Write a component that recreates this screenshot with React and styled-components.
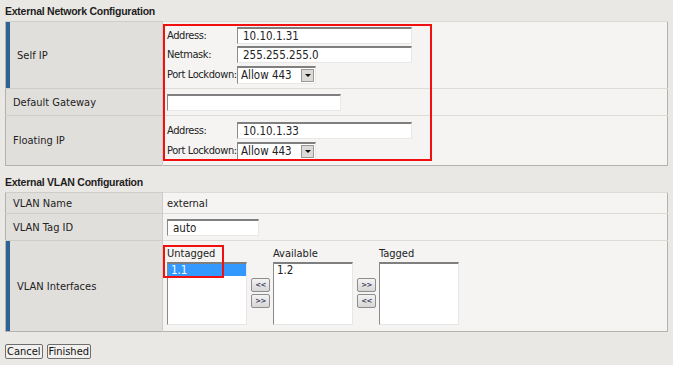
import React from "react";
import styled, { createGlobalStyle } from "styled-components";

const GlobalStyle = createGlobalStyle`
    html, body {
        margin: 0;
        padding: 0;
        background: #eae8e4;
        font: 11px 'DejaVu Sans Condensed', 'Liberation Sans', Arial, sans-serif;
        color: #222;
    }
`

const Page = styled.div`
    width: 673px;
    height: 365px;
    padding-top: 5px;
    box-sizing: border-box;
`

const SectionTitle = styled.div`
    padding: 0 5px;
    height: 16px;
    font: bold 10.5px 'Liberation Sans', Arial, sans-serif;
    letter-spacing: -0.25px;
    color: #1e1e1e;
    margin-top: ${({top}) => top || 0}px;
`

const TableWrap = styled.div`
    position: relative;
    margin: 0 5px;
    width: 663px;
`

const Table = styled.table`
    width: 100%;
    border-collapse: collapse;
    border: 1px solid #b4b2ae;
    background: #f5f4f2;
`

const Label = styled.td`
    box-sizing: border-box;
    width: 157px;
    height: ${({h}) => h}px;
    padding: 0 0 0 ${({bar}) => (bar ? 11 : 7)}px;
    background: #e1dfdb;
    border-top: 1px solid #cfcdc9;
    border-right: 1px solid #cfcdc9;
    box-shadow: ${({bar}) => (bar ? 'inset 4px 0 0 #2d6295' : 'none')};
    vertical-align: middle;
    color: #222;
    white-space: nowrap;
`

const Value = styled.td`
    padding: ${({pad}) => pad || '0 0 0 4px'};
    border-top: 1px solid #dddbd7;
    vertical-align: ${({valign}) => valign || 'middle'};
`

const FieldRow = styled.div`
    display: flex;
    align-items: center;
    height: 17px;
    margin-bottom: ${({gap}) => (gap === undefined ? 3 : gap)}px;
`

const FieldLabel = styled.span`
    width: 70px;
    flex: none;
    white-space: nowrap;
    letter-spacing: -0.4px;
`

const TextBox = styled.div`
    width: ${({w}) => w}px;
    height: 17px;
    box-sizing: border-box;
    background: #fff;
    border-style: solid;
    border-width: 2px 1px 1px 1px;
    border-color: #7f7f7f #e8e8e8 #e8e8e8 #8a8a8a;
    padding: 1px 0 0 5px;
    font-size: 11.5px;
    line-height: 13px;
    color: #222;
`

const Select = styled.div`
    width: 79px;
    height: 18px;
    box-sizing: border-box;
    background: #fff;
    border-style: solid;
    border-width: 2px 1px 1px 1px;
    border-color: #7f7f7f #e8e8e8 #e8e8e8 #8a8a8a;
    display: flex;
    align-items: center;
    justify-content: space-between;
    padding-left: 3px;
    font-size: 11.5px;
`

const SelectArrow = styled.div`
    width: 13px;
    height: 13px;
    margin-right: 1px;
    box-sizing: border-box;
    background: #dcdad6;
    border: 1px solid #9a9894;
    display: flex;
    align-items: center;
    justify-content: center;
    &::after {
        content: '';
        border-left: 3px solid transparent;
        border-right: 3px solid transparent;
        border-top: 3px solid #111;
    }
`

const RedBox = styled.div`
    position: absolute;
    left: ${({x}) => x}px;
    top: ${({y}) => y}px;
    width: ${({w}) => w}px;
    height: ${({h}) => h}px;
    border: 2px solid #f01010;
    box-sizing: border-box;
    pointer-events: none;
`

const ListGroup = styled.div`
    display: flex;
    align-items: flex-start;
`

const ListColumn = styled.div`
    display: flex;
    flex-direction: column;
    width: 80px;
    margin-right: ${({mr}) => mr || 0}px;
`

const ListTitle = styled.div`
    height: 14px;
    line-height: 12px;
    color: #222;
`

const ListBox = styled.div`
    height: 63px;
    box-sizing: border-box;
    background: #fff;
    border-style: solid;
    border-width: 2px 1px 1px 1px;
    border-color: #7f7f7f #e6e6e6 #e6e6e6 #8a8a8a;
`

const ListItem = styled.div`
    height: 12px;
    line-height: 12px;
    padding-left: 3px;
    font-size: 11.5px;
    background: ${({selected}) => (selected ? '#3399ff' : 'transparent')};
    color: ${({selected}) => (selected ? '#fff' : '#222')};
`

const MoveButtons = styled.div`
    display: flex;
    flex-direction: column;
    gap: 2px;
    margin-top: 30px;
    margin-right: ${({mr}) => mr || 3}px;
`

const MoveBtn = styled.div`
    width: 19px;
    height: 14px;
    box-sizing: border-box;
    border: 1px solid #8d8d8d;
    border-radius: 2px;
    background: linear-gradient(#f3f3f3, #d6d6d6);
    font: bold 7px 'DejaVu Sans', sans-serif;
    color: #3a3a5a;
    display: flex;
    align-items: center;
    justify-content: center;
    letter-spacing: -0.5px;
`

const ButtonBar = styled.div`
    display: flex;
    gap: 4px;
    padding: 12px 5px 0;
`

const Button = styled.div`
    height: 15px;
    box-sizing: border-box;
    padding: 0 1px;
    border: 1px solid #6e6e6e;
    border-radius: 2px;
    background: #f1f0ee;
    line-height: 13px;
    font-size: 11px;
    color: #111;
`

const App = () => {
    return(
        <>
            <GlobalStyle/>
            <Page>
                <SectionTitle>External Network Configuration</SectionTitle>
                <TableWrap>
                    <Table>
                        <tbody>
                            <tr>
                                <Label h={67} bar>Self IP</Label>
                                <Value valign="top" pad="5px 0 0 4px">
                                    <FieldRow gap={2}><FieldLabel>Address:</FieldLabel><TextBox w={175}>10.10.1.31</TextBox></FieldRow>
                                    <FieldRow><FieldLabel>Netmask:</FieldLabel><TextBox w={175}>255.255.255.0</TextBox></FieldRow>
                                    <FieldRow gap={0}><FieldLabel>Port Lockdown:</FieldLabel><Select>Allow 443<SelectArrow/></Select></FieldRow>
                                </Value>
                            </tr>
                            <tr>
                                <Label h={27}>Default Gateway</Label>
                                <Value><TextBox w={174}></TextBox></Value>
                            </tr>
                            <tr>
                                <Label h={50}>Floating IP</Label>
                                <Value valign="top" pad="6px 0 0 4px">
                                    <FieldRow><FieldLabel>Address:</FieldLabel><TextBox w={175}>10.10.1.33</TextBox></FieldRow>
                                    <FieldRow gap={0}><FieldLabel>Port Lockdown:</FieldLabel><Select>Allow 443<SelectArrow/></Select></FieldRow>
                                </Value>
                            </tr>
                        </tbody>
                    </Table>
                    <RedBox x={158} y={3} w={269} h={137}/>
                </TableWrap>

                <SectionTitle top={10}>External VLAN Configuration</SectionTitle>
                <TableWrap>
                    <Table>
                        <tbody>
                            <tr>
                                <Label h={21}>VLAN Name</Label>
                                <Value>external</Value>
                            </tr>
                            <tr>
                                <Label h={27}>VLAN Tag ID</Label>
                                <Value><TextBox w={92}>auto</TextBox></Value>
                            </tr>
                            <tr>
                                <Label h={91} bar>VLAN Interfaces</Label>
                                <Value valign="top" pad="7px 0 0 4px">
                                    <ListGroup>
                                        <ListColumn mr={4}>
                                            <ListTitle>Untagged</ListTitle>
                                            <ListBox><ListItem selected>1.1</ListItem></ListBox>
                                        </ListColumn>
                                        <MoveButtons>
                                            <MoveBtn>&lt;&lt;</MoveBtn>
                                            <MoveBtn>&gt;&gt;</MoveBtn>
                                        </MoveButtons>
                                        <ListColumn mr={4}>
                                            <ListTitle>Available</ListTitle>
                                            <ListBox><ListItem>1.2</ListItem></ListBox>
                                        </ListColumn>
                                        <MoveButtons>
                                            <MoveBtn>&gt;&gt;</MoveBtn>
                                            <MoveBtn>&lt;&lt;</MoveBtn>
                                        </MoveButtons>
                                        <ListColumn>
                                            <ListTitle>Tagged</ListTitle>
                                            <ListBox></ListBox>
                                        </ListColumn>
                                    </ListGroup>
                                </Value>
                            </tr>
                        </tbody>
                    </Table>
                    <RedBox x={158} y={53} w={61} h={33}/>
                </TableWrap>

                <ButtonBar>
                    <Button>Cancel</Button>
                    <Button>Finished</Button>
                </ButtonBar>
            </Page>
        </>
    );
};

export default App;
